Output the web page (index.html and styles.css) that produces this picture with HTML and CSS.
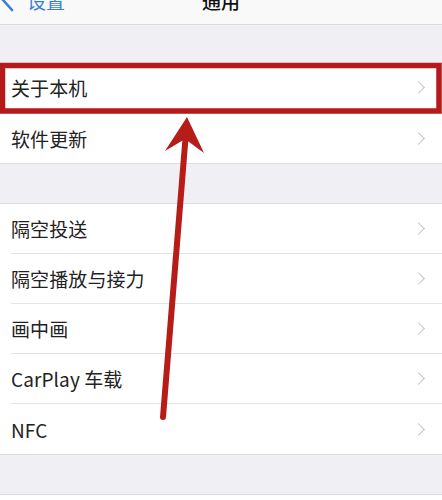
FILE: index.html
```html
<!DOCTYPE html>
<html lang="zh">
<head>
<meta charset="utf-8">
<link rel="stylesheet" href="styles.css">
</head>
<body>
<div class="page">
  <header class="nav">
    <div class="back">
      <svg class="back-icon" width="14" height="24" viewBox="0 0 14 24"><path d="M11 2 L2 12 L11 22" fill="none" stroke="#3b7cd9" stroke-width="2.6" stroke-linecap="round" stroke-linejoin="round"/></svg>
      <span class="back-text">设置</span>
    </div>
    <div class="title">通用</div>
  </header>
  <div class="spacer"></div>
  <section class="group">
    <div class="row"><span class="label">关于本机</span><span class="chev"></span></div>
    <div class="row last"><span class="label">软件更新</span><span class="chev"></span></div>
  </section>
  <div class="spacer s2"></div>
  <section class="group">
    <div class="row"><span class="label">隔空投送</span><span class="chev"></span></div>
    <div class="row"><span class="label">隔空播放与接力</span><span class="chev"></span></div>
    <div class="row"><span class="label">画中画</span><span class="chev"></span></div>
    <div class="row"><span class="label">CarPlay 车载</span><span class="chev"></span></div>
    <div class="row last"><span class="label">NFC</span><span class="chev"></span></div>
  </section>
  <div class="spacer s2"></div>
  <section class="group tail"></section>

  <svg class="annot" width="442" height="500" viewBox="0 0 442 500">
    <rect x="2.5" y="65.5" width="436.5" height="45.5" fill="none" stroke="#b5191a" stroke-width="5.5"/>
    <line x1="163" y1="417" x2="186" y2="132" stroke="#b61c18" stroke-width="6" stroke-linecap="round"/>
    <polygon points="187,117 165,151 185,139 204,153" fill="#b61c18"/>
  </svg>
</div>
</body>
</html>
```
FILE: styles.css
```css
html, body {
  margin: 0;
  padding: 0;
  background: #ffffff;
}
body {
  font-family: "Noto Sans CJK SC", "Noto Sans", sans-serif;
  color: #1c1c1e;
}
.page {
  position: relative;
  width: 442px;
  height: 500px;
  overflow: hidden;
  background: #f0f0f4;
}
.nav {
  height: 48px;
  margin-top: -24px;
  background: #f9f9fa;
  border-bottom: 1px solid #dcdce0;
  display: flex;
  align-items: center;
  position: relative;
}
.back {
  display: flex;
  align-items: center;
  gap: 12px;
  padding-left: 1px;
}
.back-text {
  font-size: 19px;
  color: #3b7cd9;
}
.title {
  position: absolute;
  left: 0;
  right: 0;
  text-align: center;
  font-size: 19px;
  font-weight: 500;
  color: #111;
  pointer-events: none;
}
.spacer {
  height: 38px;
}
.spacer.s2 {
  height: 39px;
}
.group {
  background: #ffffff;
  border-top: 1px solid #dcdce0;
  border-bottom: 1px solid #dcdce0;
}
.group:first-of-type {
  border-top: none;
}
.row {
  height: 50px;
  margin-left: 11px;
  padding-right: 16px;
  display: flex;
  align-items: center;
  justify-content: space-between;
  border-bottom: 1px solid #e3e3e6;
  box-sizing: border-box;
}
.row.last {
  border-bottom: none;
}
.label {
  font-size: 19px;
  color: #222;
  letter-spacing: 0.1px;
}
.chev {
  width: 8px;
  height: 8px;
  border-right: 1.8px solid #c3c3c7;
  border-top: 1.8px solid #c3c3c7;
  transform: rotate(45deg);
  margin-right: 3px;
}
.tail {
  height: 10px;
  border-bottom: none;
}
.annot {
  position: absolute;
  left: 0;
  top: 0;
  pointer-events: none;
}
```
